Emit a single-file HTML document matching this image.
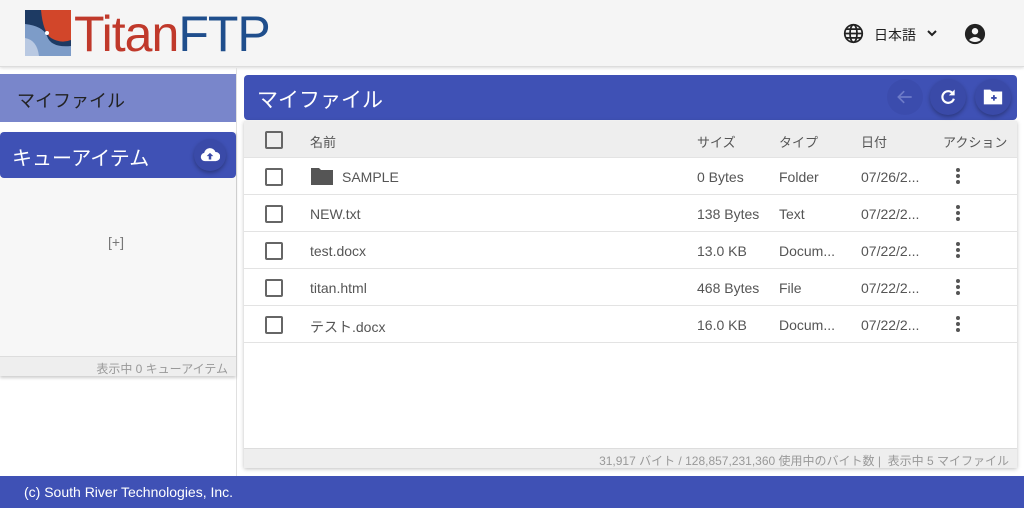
<!DOCTYPE html>
<html><head><meta charset="utf-8"><style>
*{box-sizing:border-box;margin:0;padding:0}
body{width:1024px;height:508px;overflow:hidden;background:#fff;font-family:"Liberation Sans","Noto Sans CJK JP",sans-serif;position:relative}
.hdr{position:absolute;left:0;top:0;width:1024px;height:67px;background:#f5f5f5;border-bottom:1px solid #ddd;box-shadow:0 1px 3px rgba(0,0,0,.15)}
.logo{position:absolute;left:25px;top:10px;width:46px;height:46px}
.lt{position:absolute;left:74px;top:4px;font-size:50px;letter-spacing:-1px;line-height:60px}
.vl{position:absolute;left:236px;top:68px;width:1px;height:408px;background:#e0e0e0}
.my{position:absolute;left:0;top:74px;width:236px;height:48px;background:#7986cb;color:#222;font-size:18px;padding:13px 0 0 17px}
.qp{position:absolute;left:0;top:132px;width:236px;height:244px;background:#f7f7f7;box-shadow:0 2px 3px rgba(0,0,0,.2)}
.qh{height:46px;background:#3f51b5;border-radius:4px;color:#fff;font-size:20px;padding:10px 0 0 12px;position:relative}
.circ{position:absolute;border-radius:50%;background:#3a4aa8;box-shadow:0 2px 4px rgba(0,0,0,.3)}
.qf{position:absolute;left:0;bottom:0;width:236px;height:20px;background:#eee;border-top:1px solid #ddd;color:#999;font-size:12px;text-align:right;padding:3px 8px 0 0}
.tb{position:absolute;left:244px;top:75px;width:773px;height:45px;background:#3f51b5;border-radius:4px;color:#fff;font-size:21px;padding:9px 0 0 13px}
.card{position:absolute;left:244px;top:121px;width:773px;height:347px;background:#fff;box-shadow:0 1px 4px rgba(0,0,0,.25)}
.row{position:absolute;left:0;width:773px;height:37px;border-bottom:1px solid #e3e3e3;font-size:14px;color:#555}
.row span{position:absolute;top:11px}
.cb{position:absolute;left:21px;top:10px;width:18px;height:18px;border:2px solid #666;border-radius:2px}
.dots{position:absolute;left:712px;top:10px;width:4px;height:18px}
.dots i{display:block;width:4px;height:4px;border-radius:50%;background:#555;margin-bottom:2px}
.sf{position:absolute;left:0;bottom:0;width:773px;height:20px;background:#eee;border-top:1px solid #ddd;color:#999;font-size:12px;text-align:right;padding:3px 8px 0 0}
.ft{position:absolute;left:0;top:476px;width:1024px;height:32px;background:#3f51b5;color:#fff;font-size:14px;padding:8px 0 0 24px}
</style></head><body>
<div class="hdr">
<svg class="logo" viewBox="0 0 46 46"><rect width="46" height="46" fill="#1d3a63"/><path d="M16 0H46V30Q36 34 26 28Q18 22 16 0Z" fill="#d2462a"/><path d="M0 14Q18 16 22 26Q26 38 46 36V46H0Z" fill="#7d9cc8"/><path d="M0 28Q12 30 14 46H0Z" fill="#b9c9e2"/><circle cx="22" cy="23" r="2" fill="#fff"/></svg>
<div class="lt"><span style="color:#c0392b">Titan</span><span style="color:#1f4e8c">FTP</span></div>
<svg style="position:absolute;left:843px;top:23px" width="21" height="21" viewBox="0 0 24 24" fill="none" stroke="#222" stroke-width="2"><circle cx="12" cy="12" r="10"/><ellipse cx="12" cy="12" rx="4" ry="10"/><path d="M2 12h20M4 7h16M4 17h16"/></svg>
<div style="position:absolute;left:874px;top:25px;font-size:14px;color:#222">日本語</div>
<svg style="position:absolute;left:926px;top:28px" width="12" height="10" viewBox="0 0 12 10"><path d="M2 3l4 4 4-4" fill="none" stroke="#222" stroke-width="2"/></svg>
<svg style="position:absolute;left:964px;top:23px" width="22" height="22" viewBox="0 0 24 24"><circle cx="12" cy="12" r="11" fill="#222"/><circle cx="12" cy="9" r="3.5" fill="#f5f5f5"/><path d="M5.5 18.5Q12 12 18.5 18.5Q12 23 5.5 18.5Z" fill="#f5f5f5"/></svg>
</div>
<div class="vl"></div>
<div class="my">マイファイル</div>
<div class="qp">
<div class="qh">キューアイテム
<div class="circ" style="left:194px;top:7px;width:32px;height:32px"><svg style="position:absolute;left:6px;top:7px" width="20" height="17" viewBox="0 0 24 18"><path d="M6 17a5 5 0 0 1-1-9.9A7 7 0 0 1 18.5 6 5.5 5.5 0 0 1 19 17Z" fill="#fff"/><path d="M12 7l-4 4h2.5v4h3v-4H16Z" fill="#3a4aa8"/></svg></div></div>
<div style="position:absolute;left:108px;top:102px;color:#777;font-size:14px">[+]</div>
<div class="qf">表示中 0 キューアイテム</div>
</div>
<div class="tb">マイファイル
<div class="circ" style="left:643px;top:4px;width:36px;height:36px;opacity:.6;box-shadow:none"><svg style="position:absolute;left:8px;top:8px" width="20" height="20" viewBox="0 0 24 24"><path d="M20 12H5M11 5l-7 7 7 7" fill="none" stroke="#8c97d6" stroke-width="2"/></svg></div>
<div class="circ" style="left:686px;top:4px;width:36px;height:36px"><svg style="position:absolute;left:8px;top:8px" width="20" height="20" viewBox="0 0 24 24"><path d="M18 8A7 7 0 1 0 19 14" fill="none" stroke="#fff" stroke-width="2.6"/><path d="M20 3v7h-7Z" fill="#fff"/></svg></div>
<div class="circ" style="left:731px;top:4px;width:36px;height:36px"><svg style="position:absolute;left:7px;top:8px" width="22" height="20" viewBox="0 0 24 20"><path d="M2 2h7l2 2h11v14H2Z" fill="#fff"/><path d="M13 8v6M10 11h6" stroke="#3a4aa8" stroke-width="2"/></svg></div>
</div>
<div class="card">
<div class="row" style="top:0;background:#eee;font-size:13px;color:#555"><div class="cb"></div><span style="left:66px">名前</span><span style="left:453px">サイズ</span><span style="left:535px">タイプ</span><span style="left:617px">日付</span><span style="left:699px">アクション</span></div>
<div class="row" style="top:37px"><div class="cb"></div><svg style="position:absolute;left:67px;top:9px" width="22" height="18" viewBox="0 0 22 18"><path d="M0 1h8l2 2h12v15H0Z" fill="#555"/></svg><span style="left:98px">SAMPLE</span><span style="left:453px">0 Bytes</span><span style="left:535px">Folder</span><span style="left:617px">07/26/2...</span><div class="dots"><i></i><i></i><i></i></div></div>
<div class="row" style="top:74px"><div class="cb"></div><span style="left:66px">NEW.txt</span><span style="left:453px">138 Bytes</span><span style="left:535px">Text</span><span style="left:617px">07/22/2...</span><div class="dots"><i></i><i></i><i></i></div></div>
<div class="row" style="top:111px"><div class="cb"></div><span style="left:66px">test.docx</span><span style="left:453px">13.0 KB</span><span style="left:535px">Docum...</span><span style="left:617px">07/22/2...</span><div class="dots"><i></i><i></i><i></i></div></div>
<div class="row" style="top:148px"><div class="cb"></div><span style="left:66px">titan.html</span><span style="left:453px">468 Bytes</span><span style="left:535px">File</span><span style="left:617px">07/22/2...</span><div class="dots"><i></i><i></i><i></i></div></div>
<div class="row" style="top:185px"><div class="cb"></div><span style="left:66px">テスト.docx</span><span style="left:453px">16.0 KB</span><span style="left:535px">Docum...</span><span style="left:617px">07/22/2...</span><div class="dots"><i></i><i></i><i></i></div></div>
<div class="sf">31,917 バイト / 128,857,231,360 使用中のバイト数 | &nbsp;表示中 5 マイファイル</div>
</div>
<div class="ft">(c) South River Technologies, Inc.</div>
</body></html>
